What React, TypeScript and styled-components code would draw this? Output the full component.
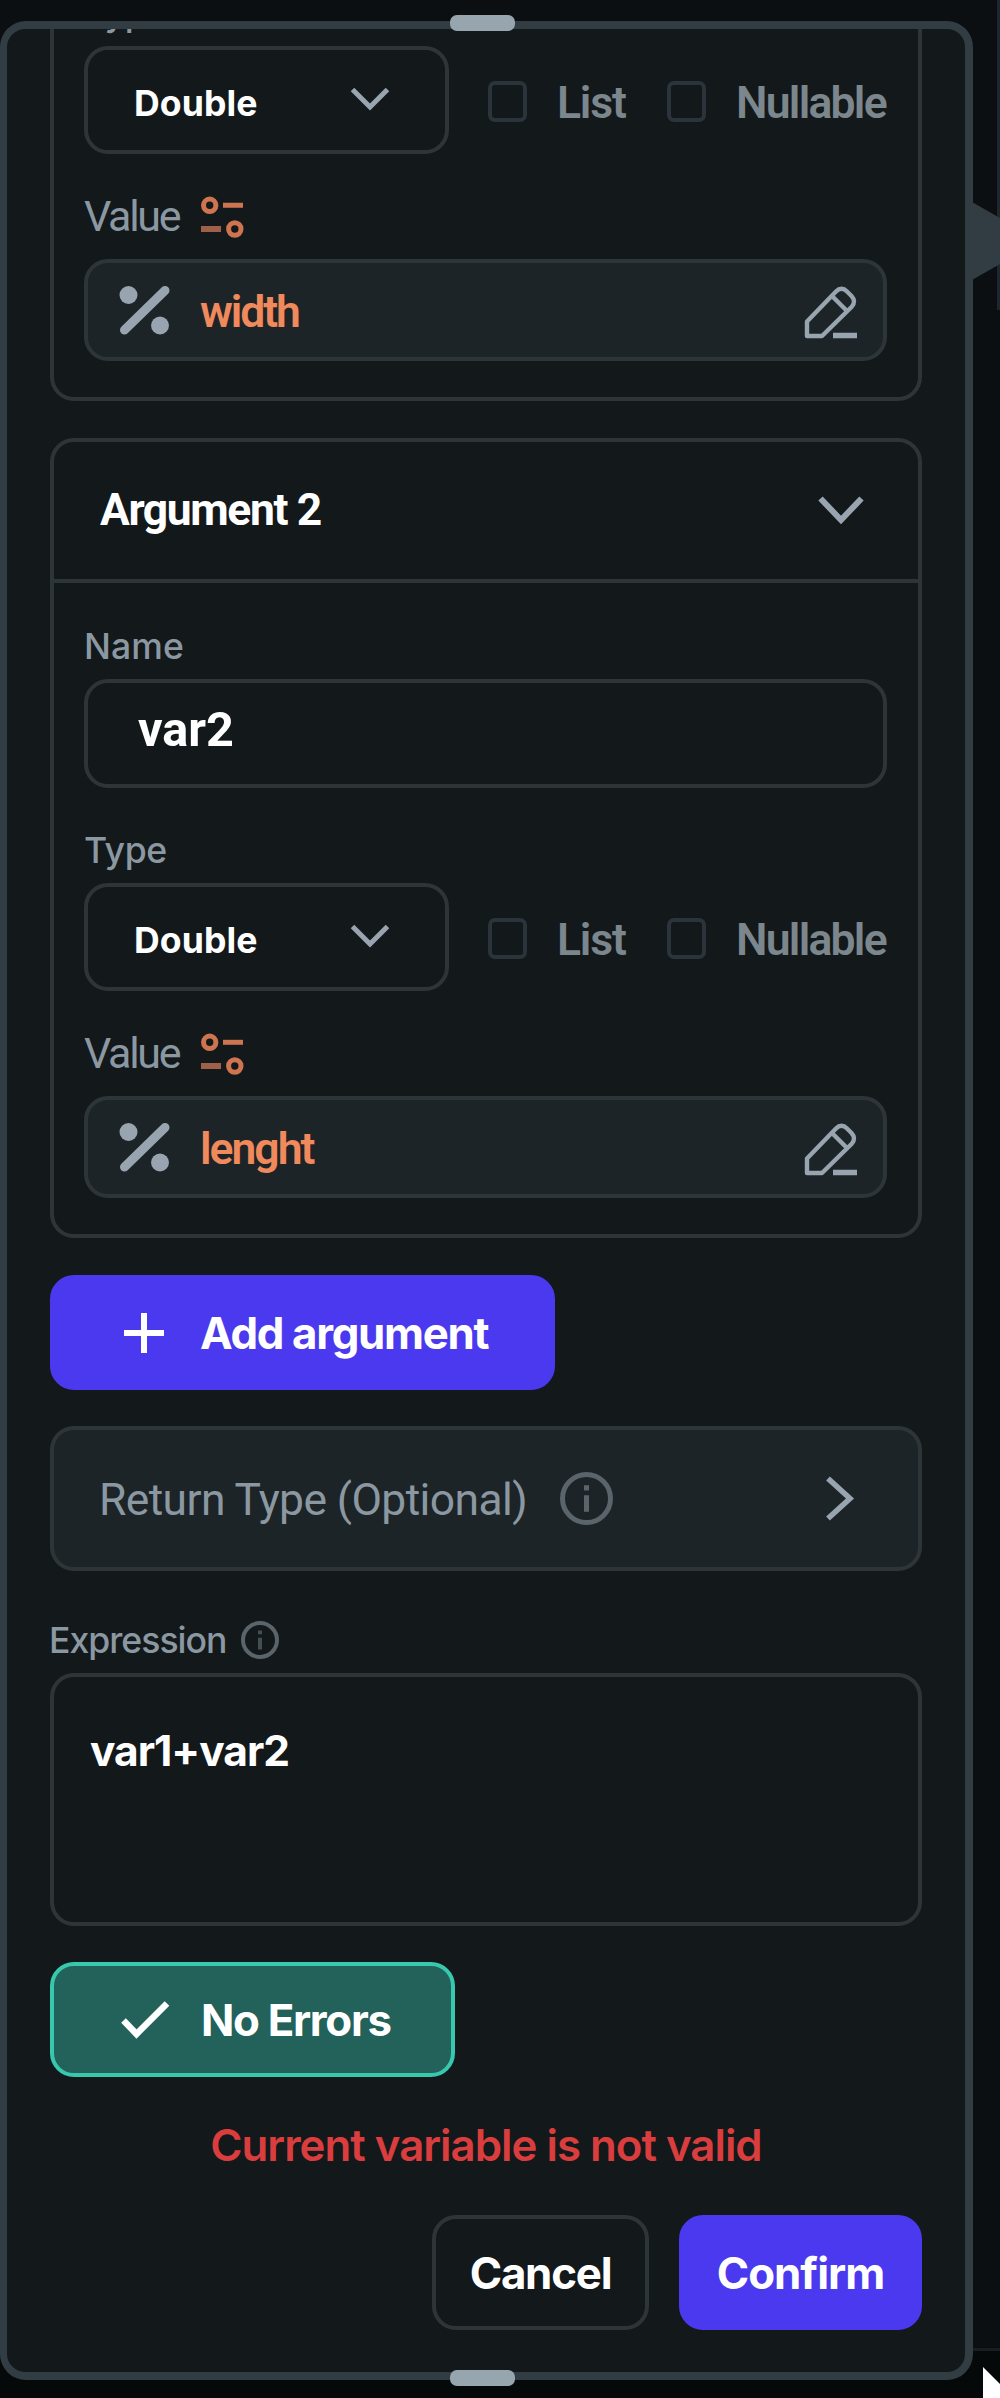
import React from 'react';
import styled, { createGlobalStyle } from 'styled-components';

const wide = '"Inter", "Liberation Sans", sans-serif';
const narrow = '"Roboto", "Liberation Sans", sans-serif';

const color = {
  backdrop: '#0b0f11',
  surface: '#13181a',
  raised: '#1d2427',
  frame: '#323c43',
  line: '#2e3539',
  muted: '#8b98a2',
  icon: '#98a4af',
  orange: '#f0895c',
  primary: '#4b39ef',
};

const GlobalStyle = createGlobalStyle`
  * { box-sizing: border-box; }
  body { margin: 0; background: ${color.backdrop}; }
  svg { display: block; flex: none; fill: none; overflow: visible; }
`;

const Page = styled.div`
  position: relative;
  width: 1000px;
  height: 2398px;
  padding-top: 21px;
  overflow: hidden;
  background: ${color.backdrop};
`;

const BottomStrip = styled.div`
  position: absolute;
  inset: 2348px 0 0 0;
  background: #060909;
  border-top: 3px solid #1a1e20;
`;

const SideStrip = styled.div`
  position: absolute;
  top: 0;
  right: 0;
  width: 3px;
  height: 310px;
  background: #1e272d;
`;

const Arrow = styled.div`
  position: absolute;
  top: 202px;
  left: 972px;
  width: 68px;
  height: 78px;
  background: ${color.frame};
  clip-path: polygon(0 0, 100% 50%, 0 100%);
`;

const Handle = styled.div<{ $top: number }>`
  position: absolute;
  top: ${p => p.$top}px;
  left: 450px;
  width: 65px;
  height: 16px;
  border-radius: 7px;
  background: #97a5af;
`;

const Cursor = styled.svg`
  position: absolute;
  left: 983px;
  top: 2367px;
`;

const Panel = styled.main`
  position: relative;
  display: flex;
  flex-direction: column;
  width: 973px;
  height: 2359px;
  padding: 0 43px;
  overflow: hidden;
  background: ${color.surface};
  border: 8px solid ${color.frame};
  border-left-width: 7px;
  border-radius: 26px;
`;

const Card = styled.section<{ $cut?: boolean }>`
  flex: none;
  border: 4px solid ${color.line};
  border-radius: 24px;
  ${p => p.$cut && 'margin: -36px 0 37px; border-top: 0; border-top-left-radius: 0; border-top-right-radius: 0;'}
`;

const CardHeader = styled.header`
  display: flex;
  align-items: center;
  justify-content: space-between;
  height: 141px;
  padding: 0 54px 4px 46px;
  border-bottom: 4px solid ${color.line};

  svg { margin-top: 3px; }
`;

const CardBody = styled.div<{ $cut?: boolean }>`
  display: flex;
  flex-direction: column;
  padding: ${p => (p.$cut ? 0 : 43)}px 31px 36px 30px;
`;

const Text = styled.span<{ $size: number; $ls: number; $weight?: number; $font?: string; $color?: string }>`
  padding-top: 2px;
  font-family: ${p => p.$font ?? wide};
  font-size: ${p => p.$size}px;
  font-weight: ${p => p.$weight ?? 700};
  letter-spacing: ${p => p.$ls}px;
  line-height: 40px;
  color: ${p => p.$color ?? '#fff'};
  white-space: nowrap;
`;

const FieldLabel = styled.div<{ $gap?: number }>`
  display: flex;
  align-items: center;
  height: 40px;
  margin-bottom: ${p => p.$gap ?? 13}px;
`;

const LabelSlot = styled.div`
  display: flex;
  width: 117px;
  padding-top: 3px;
`;

const TextInput = styled.div`
  display: flex;
  align-items: center;
  height: 109px;
  margin-bottom: 42px;
  padding: 0 0 9px 50px;
  border: 4px solid ${color.line};
  border-radius: 24px;
`;

const TypeRow = styled.div`
  display: flex;
  align-items: center;
  height: 108px;
  margin-bottom: 39px;
`;

const Select = styled.div`
  display: flex;
  align-items: center;
  justify-content: space-between;
  width: 365px;
  height: 108px;
  margin-right: 39px;
  padding: 5px 55px 0 46px;
  border: 4px solid ${color.line};
  border-radius: 24px;

  svg { margin-bottom: 7px; }
`;

const Check = styled.div<{ $width?: number }>`
  display: flex;
  align-items: center;
  gap: 30px;
  width: ${p => (p.$width ? `${p.$width}px` : 'auto')};
  padding-top: 3px;
`;

const CheckBox = styled.i`
  flex: none;
  width: 39px;
  height: 41px;
  border: 4px solid #2b343b;
  border-radius: 7px;
`;

const ValueField = styled.div`
  display: flex;
  align-items: center;
  height: 102px;
  padding: 0 26px 0 31px;
  background: ${color.raised};
  border: 4px solid ${color.line};
  border-radius: 24px;

  svg:last-child { margin-top: 4px; }
`;

const ValueText = styled.div`
  flex: 1;
  display: flex;
  padding: 2px 0 0 30px;
`;

const Button = styled.button<{ $kind: 'primary' | 'success' | 'outline'; $width: number }>`
  display: flex;
  flex: none;
  align-items: center;
  justify-content: center;
  width: ${p => p.$width}px;
  height: 115px;
  padding: 0;
  border-radius: 24px;
  background: ${p => ({ primary: color.primary, success: '#22625b', outline: 'transparent' })[p.$kind]};
  border: 4px solid ${p => ({ primary: color.primary, success: '#37c8ae', outline: color.line })[p.$kind]};
`;

const IconButton = styled(Button)<{ $iconGap: number; $start: number }>`
  justify-content: flex-start;
  gap: ${p => p.$iconGap}px;
  padding-left: ${p => p.$start}px;
`;

const AddRow = styled.div`
  display: flex;
  margin: 37px 0 36px;
`;

const ReturnType = styled.section`
  display: flex;
  flex: none;
  align-items: center;
  height: 145px;
  padding: 0 63px 0 45px;
  background: ${color.raised};
  border: 4px solid ${color.line};
  border-radius: 24px;
`;

const ReturnLabel = styled.div`
  display: flex;
  width: 461px;
`;

const Spacer = styled.div`
  flex: 1;
`;

const ExpressionLabel = styled.div`
  display: flex;
  align-items: center;
  gap: 15px;
  height: 40px;
  margin: 49px 0 13px -1px;
`;

const ExpressionBox = styled.div`
  flex: none;
  height: 253px;
  padding: 54px 0 0 36px;
  border: 4px solid ${color.line};
  border-radius: 24px;
`;

const StatusRow = styled.div`
  display: flex;
  margin-top: 36px;
`;

const ErrorText = styled.div`
  display: flex;
  justify-content: center;
  height: 40px;
  margin-top: 47px;
`;

const Footer = styled.footer`
  display: flex;
  justify-content: flex-end;
  gap: 30px;
  margin-top: 51px;
`;

const ChevronDown = ({ w, h, sw = 6 }: { w: number; h: number; sw?: number }) => (
  <svg width={w} height={h} viewBox={`0 0 ${w} ${h}`} stroke={color.icon} strokeWidth={sw}>
    <path d={`M2.5 2.5 L${w / 2} ${h - 4} L${w - 2.5} 2.5`} />
  </svg>
);

const ChevronRight = () => (
  <svg width="30" height="46" viewBox="0 0 30 46" stroke={color.icon} strokeWidth="5.5">
    <path d="M3 2.5 L25 22.5 L3 42.5" />
  </svg>
);

const VariableIcon = styled.svg`
  margin-top: 8px;
`;

const Variable = () => (
  <VariableIcon width="42" height="42" viewBox="0 0 42 42" stroke="#cf7450" strokeWidth="5">
    <circle cx="8.7" cy="9.3" r="6.2" />
    <path d="M22 9.3h20" />
    <path d="M0 33h20" stroke="#9f6049" strokeWidth="6" />
    <circle cx="33.8" cy="33" r="6.2" />
  </VariableIcon>
);

const Percent = () => (
  <svg width="51" height="50" viewBox="0 0 51 50">
    <circle cx="9.5" cy="10" r="9" fill={color.icon} />
    <circle cx="41" cy="40.5" r="9" fill={color.icon} />
    <path d="M5.5 45 L46 5.5" stroke={color.icon} strokeWidth="9" strokeLinecap="round" />
  </svg>
);

const Pencil = () => (
  <svg width="53" height="53" viewBox="0 0 53 53" stroke={color.icon} strokeWidth="4.4" strokeLinejoin="round">
    <path d="M3 50 V35.5 L32 5.5 Q37.5 0 43 5.5 L47.5 10 Q52.5 15.5 47.5 21 L18 50 Z" />
    <path d="M28 10 L43 25" />
    <path d="M29 49.5 H53" strokeWidth="5.5" />
  </svg>
);

const Info = ({ size, sw, dim }: { size: number; sw: number; dim?: boolean }) => (
  <svg width={size} height={size} viewBox={`0 0 ${size} ${size}`} stroke="#59646b" strokeWidth={sw}>
    <circle cx={size / 2} cy={size / 2} r={(size - sw) / 2} />
    <path
      d={`M${size / 2} ${size * 0.25} v${size * 0.1} M${size / 2} ${size * 0.44} v${size * 0.31}`}
      stroke={dim ? '#444e54' : '#59646b'}
    />
  </svg>
);

const Plus = () => (
  <svg width="40" height="40" viewBox="0 0 40 40" stroke="#fff" strokeWidth="6">
    <path d="M20 0v40M0 20h40" />
  </svg>
);

const Tick = () => (
  <svg width="49" height="38" viewBox="0 0 49 38" stroke="#fff" strokeWidth="6.5">
    <path d="M2.5 19.5 L15.5 33 L46 2.5" />
  </svg>
);

const TypeAndValue = ({ value, ls }: { value: string; ls: number }) => (
  <>
    <FieldLabel>
      <Text $size={35.6} $ls={-0.4} $weight={500} $color={color.muted}>Type</Text>
    </FieldLabel>
    <TypeRow>
      <Select>
        <Text $size={35.6} $ls={0.1}>Double</Text>
        <ChevronDown w={40} h={24} sw={5} />
      </Select>
      <Check $width={179}>
        <CheckBox />
        <Text $font={narrow} $size={44.5} $ls={-1.2} $weight={600} $color="#7b868d">List</Text>
      </Check>
      <Check>
        <CheckBox />
        <Text $font={narrow} $size={44.5} $ls={-1.75} $weight={600} $color="#7b868d">Nullable</Text>
      </Check>
    </TypeRow>
    <FieldLabel $gap={26}>
      <LabelSlot>
        <Text $font={narrow} $size={43} $ls={-2.3} $weight={450} $color={color.muted}>Value</Text>
      </LabelSlot>
      <Variable />
    </FieldLabel>
    <ValueField>
      <Percent />
      <ValueText>
        <Text $font={narrow} $size={44.5} $ls={ls} $weight={600} $color={color.orange}>{value}</Text>
      </ValueText>
      <Pencil />
    </ValueField>
  </>
);

export default function App() {
  return (
    <Page>
      <GlobalStyle />
      <BottomStrip />
      <SideStrip />
      <Arrow />
      <Panel>
        <Card $cut>
          <CardBody $cut>
            <TypeAndValue value="width" ls={-2.1} />
          </CardBody>
        </Card>

        <Card>
          <CardHeader>
            <Text $font={narrow} $size={44.4} $ls={-1.4}>Argument 2</Text>
            <ChevronDown w={46} h={28} sw={6} />
          </CardHeader>
          <CardBody>
            <FieldLabel>
              <Text $size={35.6} $ls={0.1} $weight={500} $color={color.muted}>Name</Text>
            </FieldLabel>
            <TextInput>
              <Text $font={narrow} $size={48.6} $ls={0}>var2</Text>
            </TextInput>
            <TypeAndValue value="lenght" ls={-2} />
          </CardBody>
        </Card>

        <AddRow>
          <IconButton $kind="primary" $width={505} $start={70} $iconGap={36}>
            <Plus />
            <Text $size={43.8} $ls={-1.3}>Add argument</Text>
          </IconButton>
        </AddRow>

        <ReturnType>
          <ReturnLabel>
            <Text $font={narrow} $size={44.4} $ls={-0.6} $weight={450} $color={color.muted}>
              Return Type (Optional)
            </Text>
          </ReturnLabel>
          <Info size={53} sw={5} />
          <Spacer />
          <ChevronRight />
        </ReturnType>

        <ExpressionLabel>
          <Text $size={35.6} $ls={-1} $weight={500} $color={color.muted}>Expression</Text>
          <Info size={38} sw={4} dim />
        </ExpressionLabel>
        <ExpressionBox>
          <Text $size={42.5} $ls={-1}>var1+var2</Text>
        </ExpressionBox>

        <StatusRow>
          <IconButton $kind="success" $width={405} $start={67} $iconGap={31}>
            <Tick />
            <Text $size={43.8} $ls={-1.3}>No Errors</Text>
          </IconButton>
        </StatusRow>

        <ErrorText>
          <Text $size={43.8} $ls={-1} $weight={600} $color="#da3d3e">Current variable is not valid</Text>
        </ErrorText>

        <Footer>
          <Button $kind="outline" $width={217}>
            <Text $size={43.8} $ls={-1.2}>Cancel</Text>
          </Button>
          <Button $kind="primary" $width={243}>
            <Text $size={43.8} $ls={-1}>Confirm</Text>
          </Button>
        </Footer>
      </Panel>
      <Handle $top={15} />
      <Handle $top={2370} />
      <Cursor width="40" height="50" viewBox="0 0 40 50">
        <path d="M0 0 L36 36 H0 Z" fill="#fff" />
      </Cursor>
    </Page>
  );
}
